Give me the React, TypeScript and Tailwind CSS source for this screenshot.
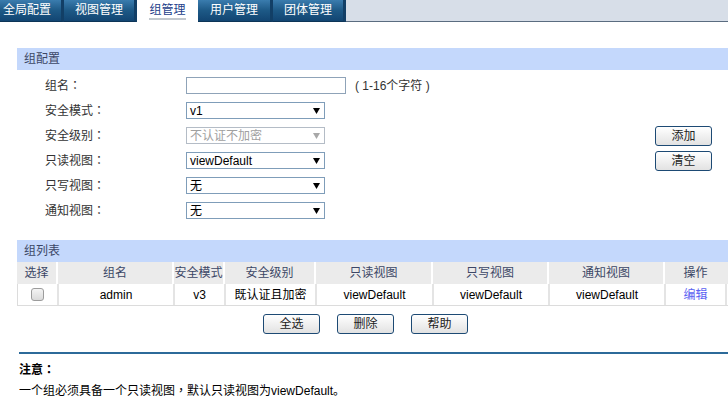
import type { ReactNode } from 'react'

const font = { fontFamily: '"Liberation Sans", "Noto Sans CJK SC", sans-serif' }
// TC font centres full-width punctuation, like the original page
const punct = { fontFamily: '"Noto Sans CJK TC", sans-serif' }

const tabs = [
  { label: '全局配置', w: 'w-[64px]', pad: 'justify-start pl-[3px]' },
  { label: '视图管理', w: 'w-[73px]', pad: 'justify-center' },
  { label: '组管理', w: 'w-[61px]', pad: 'justify-center', active: true },
  { label: '用户管理', w: 'w-[75px]', pad: 'justify-center' },
  { label: '团体管理', w: 'w-[73px]', pad: 'justify-center' },
]

function Arrow({ gray }: { gray?: boolean }) {
  return (
    <svg width="7" height="6" viewBox="0 0 7 6">
      <path d="M0 0 H7 L3.5 6 Z" fill={gray ? '#a8a8a8' : '#000'} />
    </svg>
  )
}

function Select({ value, disabled }: { value: string; disabled?: boolean }) {
  return (
    <div
      className={
        'flex h-[17px] w-[139px] items-center justify-between border bg-white pl-[3px] pr-[4px] text-[12px] leading-none ' +
        (disabled ? 'border-[#b4bcc6] text-[#a0a0a0]' : 'border-[#7f9db9] text-black')
      }
    >
      <span>{value}</span>
      <Arrow gray={disabled} />
    </div>
  )
}

function Btn({ children }: { children: ReactNode }) {
  return (
    <button className="flex h-[20px] w-[57px] items-center justify-center rounded-[3px] border border-[#1d4a74] bg-gradient-to-b from-white to-[#e2e2e2] text-[12px] leading-none text-[#222]">
      {children}
    </button>
  )
}

function Row({ label, children, right }: { label: string; children: ReactNode; right?: ReactNode }) {
  return (
    <div className="flex h-[25px] items-center">
      <div className="w-[141px] pl-[28px] text-[12px] text-[#333] box-content">
        {label}
        <span style={punct}>：</span>
      </div>
      <div className="flex items-center">{children}</div>
      {right && <div className="ml-auto pr-[16px]">{right}</div>}
    </div>
  )
}

function SectionHead({ title }: { title: string }) {
  return <div className="flex h-[22px] items-center bg-[#c4d8fc] pl-[7px] text-[12px] text-[#3c4766]">{title}</div>
}

const cols = [
  { h: '选择', w: 'w-[41px]' },
  { h: '组名', w: 'w-[116px]' },
  { h: '安全模式', w: 'w-[51px]' },
  { h: '安全级别', w: 'w-[91px]' },
  { h: '只读视图', w: 'w-[117px]' },
  { h: '只写视图', w: 'w-[116px]' },
  { h: '通知视图', w: 'w-[116px]' },
  { h: '操作', w: 'w-[61px]' },
]

export default function App() {
  return (
    <div className="h-[400px] w-[728px] overflow-hidden bg-white" style={font}>
      {/* tab bar */}
      <div className="flex h-[22px]">
        {tabs.map((t) =>
          t.active ? (
            <div key={t.label} className={`${t.w} flex items-start justify-center bg-white pt-[3px]`}>
              <span className="border-b-2 border-[#c2c8ce] pb-[1px] text-[12px] leading-[14px] text-[#23408a]">{t.label}</span>
            </div>
          ) : (
            <div
              key={t.label}
              className={`${t.w} ${t.pad} flex items-center border-b border-r-[3px] border-b-[#0c3457] border-r-[#123f66] bg-gradient-to-b from-[#3a7cae] via-[#1d5986] to-[#124572] pb-[1px] text-[12px] text-white`}
            >
              {t.label}
            </div>
          ),
        )}
        <div className="flex-1 border-b border-[#5a6c80] bg-[#d7dee8]" />
      </div>

      <div className="ml-[17px] mt-[26px]">
        <SectionHead title="组配置" />
        <div className="pt-[3px]">
          <Row label="组名">
            <div className="h-[17px] w-[160px] border border-[#8fa3b8] bg-white" />
            <span className="ml-[9px] text-[12px] text-[#333]">( 1-16个字符 )</span>
          </Row>
          <Row label="安全模式">
            <Select value="v1" />
          </Row>
          <Row label="安全级别" right={<Btn>添加</Btn>}>
            <Select value="不认证不加密" disabled />
          </Row>
          <Row label="只读视图" right={<Btn>清空</Btn>}>
            <Select value="viewDefault" />
          </Row>
          <Row label="只写视图">
            <Select value="无" />
          </Row>
          <Row label="通知视图">
            <Select value="无" />
          </Row>
        </div>

        <div className="mt-[17px]">
          <SectionHead title="组列表" />
          <div className="flex h-[22px] bg-[#ebebeb] text-[12px] text-[#3c4766]">
            {cols.map((c, i) => (
              <div
                key={c.h}
                className={`${c.w} flex items-center justify-center ${i < cols.length - 1 ? 'border-r-2 border-white' : ''}`}
              >
                {c.h}
              </div>
            ))}
          </div>
          <div className="flex h-[22px] w-[711px] border-b border-l border-[#dcdcdc] text-[12px] text-black">
            {[
              <div key="cb" className="h-[13px] w-[13px] rounded-[3px] border border-[#9c9c9c] bg-gradient-to-b from-[#f4f4f4] to-[#dadada]" />,
              'admin',
              'v3',
              '既认证且加密',
              'viewDefault',
              'viewDefault',
              'viewDefault',
              <span key="e" className="text-[#5b63f2]">编辑</span>,
            ].map((v, i) => (
              <div key={i} className={`${cols[i].w} flex items-center justify-center border-r-2 border-[#e4e4e4]`}>
                {v}
              </div>
            ))}
          </div>

          <div className="mt-[8px] flex gap-[17px] pl-[246px]">
            <Btn>全选</Btn>
            <Btn>删除</Btn>
            <Btn>帮助</Btn>
          </div>
        </div>
      </div>

      <div className="ml-[19px] mt-[18px] h-[2px] bg-[#2c6a99]" />
      <div className="ml-[19px] mt-[8px] text-[12px] font-bold leading-[14px] text-black">
        注意<span style={punct}>：</span>
      </div>
      <div className="ml-[19px] mt-[6px] text-[12px] leading-[14px] text-black">
        一个组必须具备一个只读视图<span style={punct}>，</span>默认只读视图为viewDefault。
      </div>
    </div>
  )
}
